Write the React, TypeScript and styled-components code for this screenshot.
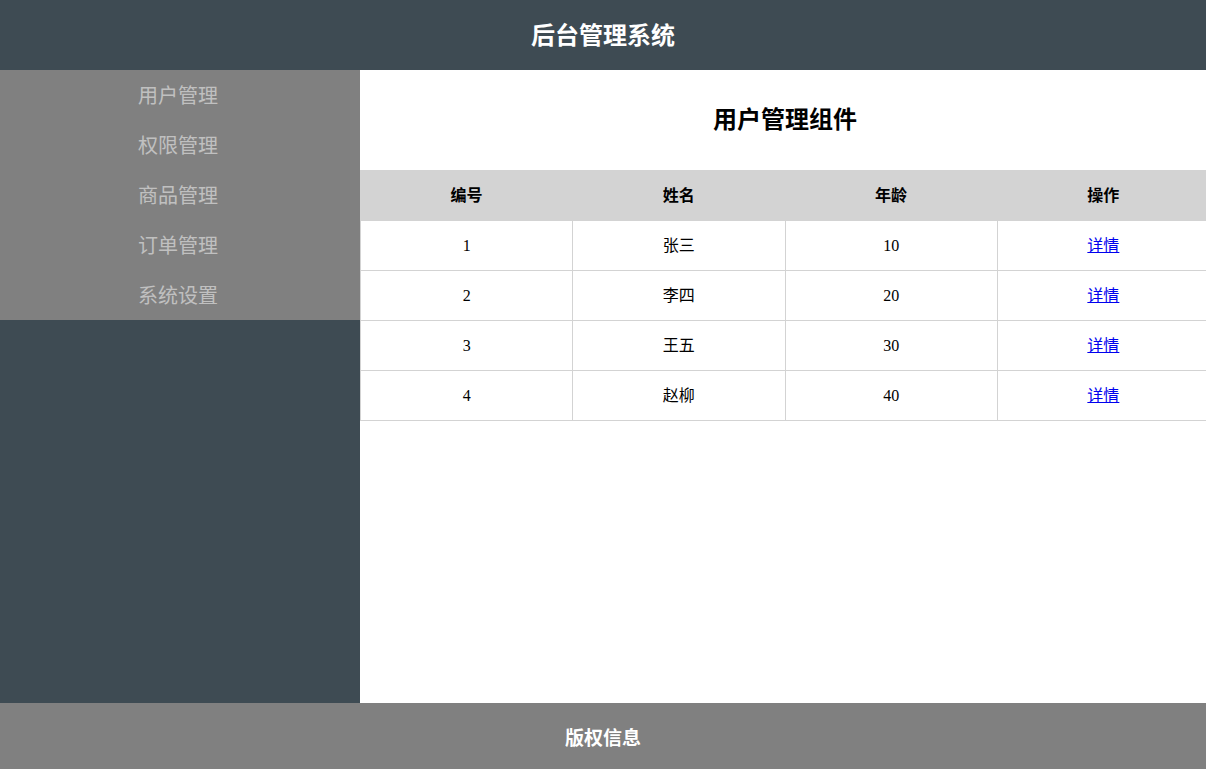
import styled, { createGlobalStyle } from "styled-components";

const GlobalStyle = createGlobalStyle`
  html, body {
    margin: 0;
    padding: 0;
    height: 100%;
    overflow: hidden;
  }
  #root {
    height: 100%;
  }
  body {
    font-family: "Liberation Serif", "Noto Sans CJK SC", serif;
    font-size: 16px;
  }
`;

const Layout = styled.div`
  height: 100vh;
  display: flex;
  flex-direction: column;
`;

const Header = styled.header`
  height: 70px;
  flex-shrink: 0;
  background: #3e4b53;
  color: #fff;
  display: flex;
  align-items: center;
  justify-content: center;
  padding-bottom: 4px;
  box-sizing: border-box;
  font-family: "Noto Sans CJK SC", sans-serif;
  font-size: 24px;
  font-weight: bold;
`;

const Body = styled.div`
  flex: 1;
  display: flex;
  min-height: 0;
  overflow: hidden;
`;

const Sidebar = styled.aside`
  width: 360px;
  flex-shrink: 0;
  background: #3e4b53;
`;

const Menu = styled.ul`
  list-style: none;
  margin: 0;
  padding: 0;
  background: #808080;
`;

const MenuItem = styled.li`
  height: 50px;
  line-height: 50px;
  text-align: center;
  padding-right: 4px;
  color: #c0c0c0;
  font-family: "Noto Sans CJK SC", sans-serif;
  font-size: 20px;
`;

const Main = styled.main`
  width: 850px;
  flex-shrink: 0;
  background: #fff;
`;

const Title = styled.h2`
  margin: 0;
  height: 100px;
  line-height: 96px;
  text-align: center;
  font-family: "Noto Sans CJK SC", sans-serif;
  font-size: 24px;
  font-weight: bold;
`;

const Table = styled.table`
  width: 100%;
  border-collapse: collapse;
  table-layout: fixed;
`;

const Th = styled.th`
  height: 49px;
  padding: 0;
  line-height: 20px;
  background: #d3d3d3;
  border: 1px solid #d3d3d3;
  font-weight: bold;
`;

const Td = styled.td`
  height: 49px;
  padding: 0;
  line-height: 20px;
  text-align: center;
  border: 1px solid #d3d3d3;
`;

const DetailLink = styled.a`
  color: #0000ee;
  text-decoration: underline;
`;

const Footer = styled.footer`
  height: 66px;
  flex-shrink: 0;
  background: #808080;
  color: #fff;
  display: flex;
  align-items: center;
  justify-content: center;
  font-family: "Noto Sans CJK SC", sans-serif;
  font-size: 19px;
  font-weight: bold;
`;

const menus = ["用户管理", "权限管理", "商品管理", "订单管理", "系统设置"];

const users = [
  { id: 1, name: "张三", age: 10 },
  { id: 2, name: "李四", age: 20 },
  { id: 3, name: "王五", age: 30 },
  { id: 4, name: "赵柳", age: 40 },
];

const App = () => {
  return (
    <>
      <GlobalStyle />
      <Layout>
        <Header>后台管理系统</Header>
        <Body>
          <Sidebar>
            <Menu>
              {menus.map((m) => (
                <MenuItem key={m}>{m}</MenuItem>
              ))}
            </Menu>
          </Sidebar>
          <Main>
            <Title>用户管理组件</Title>
            <Table>
              <thead>
                <tr>
                  <Th>编号</Th>
                  <Th>姓名</Th>
                  <Th>年龄</Th>
                  <Th>操作</Th>
                </tr>
              </thead>
              <tbody>
                {users.map((u) => (
                  <tr key={u.id}>
                    <Td>{u.id}</Td>
                    <Td>{u.name}</Td>
                    <Td>{u.age}</Td>
                    <Td>
                      <DetailLink href="#">详情</DetailLink>
                    </Td>
                  </tr>
                ))}
              </tbody>
            </Table>
          </Main>
        </Body>
        <Footer>版权信息</Footer>
      </Layout>
    </>
  );
};

export default App;
